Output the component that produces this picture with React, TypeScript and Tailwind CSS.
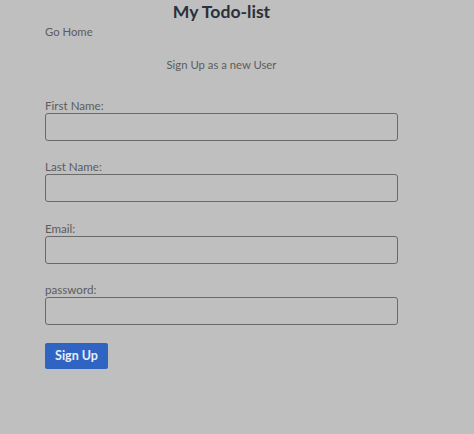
import React from 'react';

const fields = [
  { id: 'firstName', label: 'First Name:', type: 'text' },
  { id: 'lastName', label: 'Last Name:', type: 'text' },
  { id: 'email', label: 'Email:', type: 'email' },
  { id: 'password', label: 'password:', type: 'password' },
];

const App: React.FC = () => {
  return (
    <div className="min-h-[434px] w-full bg-[#bfbfbf] font-['Lato',sans-serif] text-[#5c5c5c]">
      <div className="ml-[45px] w-[353px] flex flex-col">
        <h1 className="text-center text-[17.6px] font-bold leading-[24px] text-[#2b303a]">My Todo-list</h1>
        <a className="text-[11.3px] leading-[16px] text-[#5c5c5c] w-fit">Go Home</a>
        <p className="mt-[17px] text-center text-[11.3px] leading-[16px]">Sign Up as a new User</p>
        <form className="mt-[26px] flex flex-col gap-[19.4px]">
          {fields.map(f => (
            <div key={f.id} className="flex flex-col">
              <label htmlFor={f.id} className="text-[11.6px] leading-[14px]">{f.label}</label>
              <input
                id={f.id}
                type={f.type}
                className="h-[28px] w-[353px] rounded-[3px] border border-[#6a6a6a] bg-transparent"
              />
            </div>
          ))}
          <button
            type="button"
            className="-mt-[1.5px] h-[26px] w-[63px] rounded-[2px] bg-[#2f64c3] text-[12.5px] font-bold text-[#e8eef8]"
          >
            Sign Up
          </button>
        </form>
      </div>
    </div>
  );
};

export default App;
